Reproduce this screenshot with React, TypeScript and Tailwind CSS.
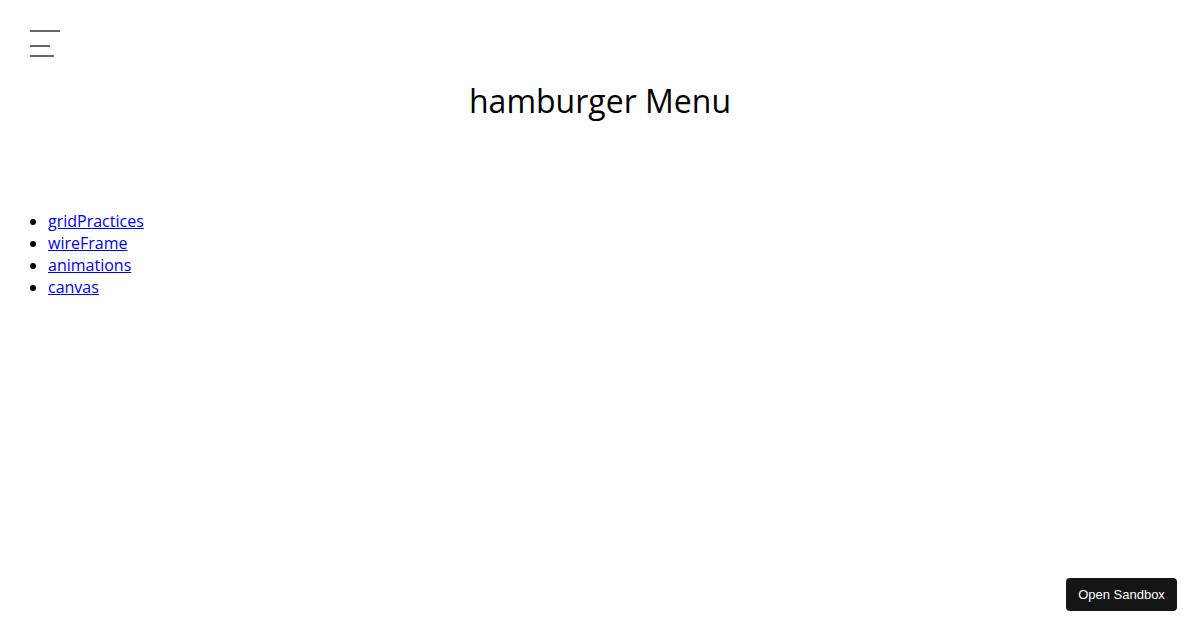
import React from "react";

export default function App() {
  return (
    <div className="min-h-[630px] bg-white text-black" style={{ fontFamily: '"Open Sans", sans-serif' }}>
      <div className="pt-[30px] pl-[30px]">
        <div className="flex flex-col w-[30px]">
          <div className="h-[2px] w-[30px] bg-[#666666]" />
          <div className="h-[2px] w-[20px] bg-[#666666] mt-[13px]" />
          <div className="h-[2px] w-[24px] bg-[#666666] mt-[8px]" />
        </div>
      </div>
      <h1 className="mt-[22px] text-center text-[32px] leading-[normal] font-normal">hamburger Menu</h1>
      <ul className="mt-[88px] ml-[8px] pl-[40px] list-disc text-[16px] leading-[normal]">
        <li><a href="#" className="text-[#0000ee] underline">gridPractices</a></li>
        <li><a href="#" className="text-[#0000ee] underline">wireFrame</a></li>
        <li><a href="#" className="text-[#0000ee] underline">animations</a></li>
        <li><a href="#" className="text-[#0000ee] underline">canvas</a></li>
      </ul>
      <div
        className="fixed right-[23px] bottom-[19px] h-[33px] w-[111px] flex items-center justify-center rounded-[4px] bg-[#151515] text-white text-[13px]"
        style={{ fontFamily: '"Liberation Sans", Arial, sans-serif' }}
      >
        Open Sandbox
      </div>
    </div>
  );
}
